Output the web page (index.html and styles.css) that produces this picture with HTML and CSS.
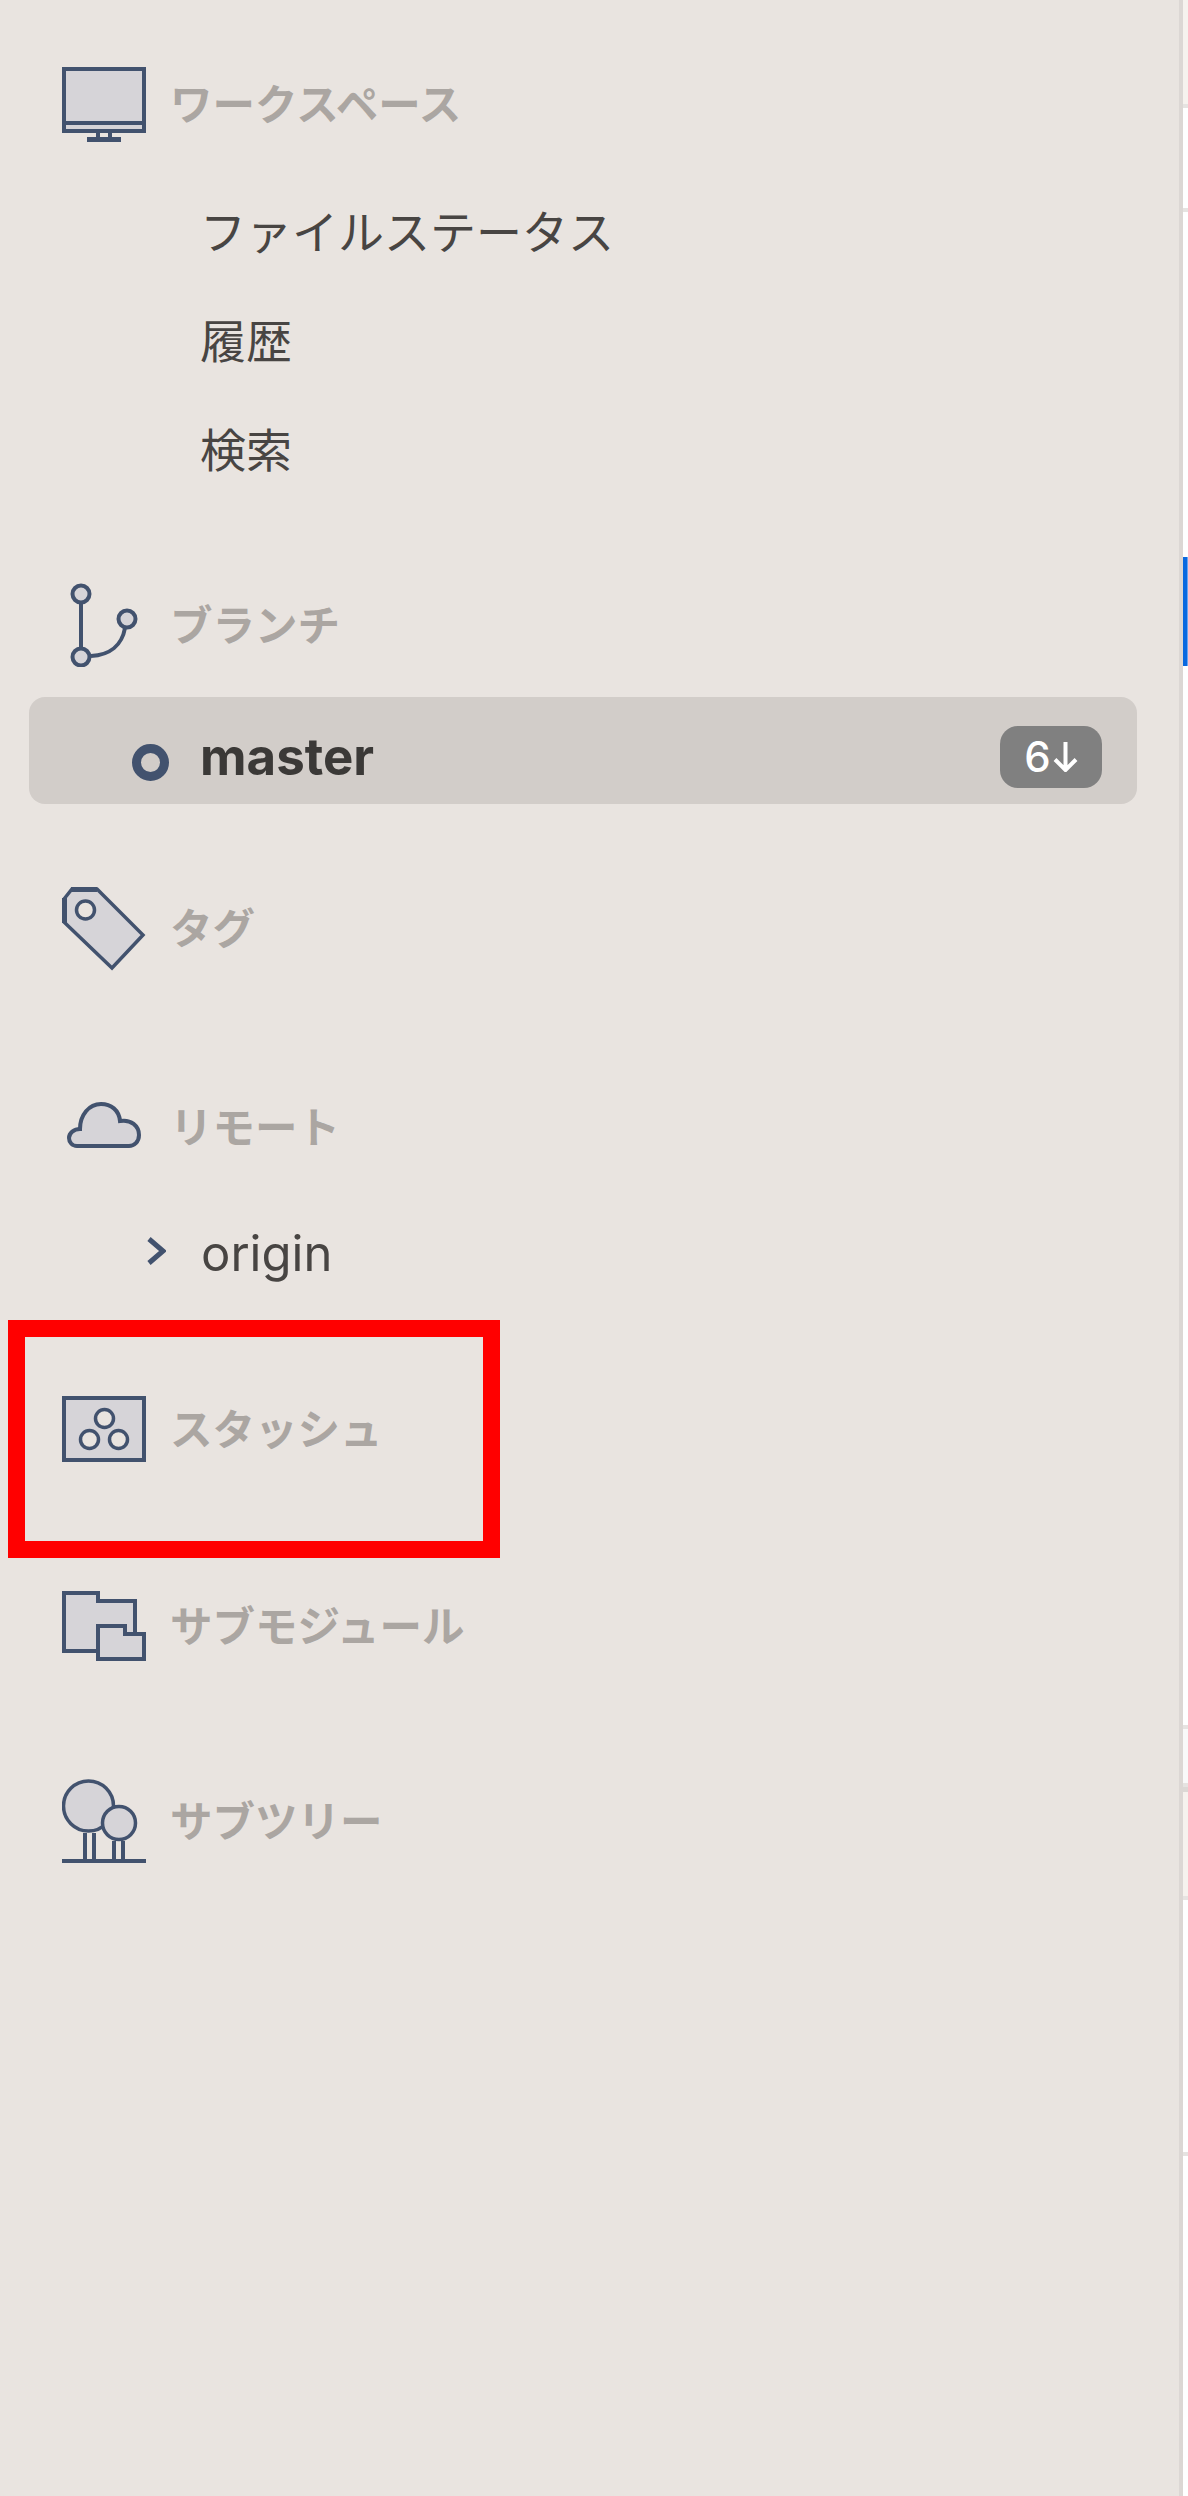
FILE: index.html
```html
<!DOCTYPE html>
<html lang="ja">
<head>
    <title>サイドバー</title>
    <link rel="stylesheet" href="styles.css">
</head>
<body>
    <div class="window">
        <nav class="sidebar">
            <div class="head">
                <svg class="icon" width="84" height="75" viewBox="0 0 84 75">
                    <rect class="shape" x="2" y="2" width="80" height="62"/>
                    <path class="line" d="M2 56H82"/>
                    <path class="solid" d="M34 66h4v5h-4zM46 66h4v5h-4zM25 70h34v5H25z"/>
                </svg>
                <span class="title">ワークスペース</span>
            </div>
            <ul class="items">
                <li>ファイルステータス</li>
                <li>履歴</li>
                <li>検索</li>
            </ul>

            <div class="head head-branch">
                <svg class="icon" width="84" height="84" viewBox="0 0 84 84">
                    <path class="line" d="M19 20V65M29 73C48 72 60 62 63 45"/>
                    <circle class="shape" cx="19" cy="11" r="8.5"/>
                    <circle class="shape" cx="65" cy="36" r="8.5"/>
                    <circle class="shape" cx="19" cy="74" r="8.5"/>
                </svg>
                <span class="title">ブランチ</span>
            </div>
            <div class="branch">
                <span class="dot"></span>
                <span class="branch-name">master</span>
                <span class="badge">6<svg width="25" height="31" viewBox="0 0 25 31"><path d="M12.500 1V29M2 18.500L12.500 29L23 18.500"/></svg></span>
            </div>

            <div class="head head-tag">
                <svg class="icon" width="84" height="84" viewBox="0 0 84 84">
                    <path class="shape thin" d="M10 2H35L81 48L50 81L2 35V12Z"/>
                    <path class="solid" d="M9 0H35V5H9zM0 11H5V36H0z"/>
                    <circle class="hole" cx="23.5" cy="23" r="9"/>
                </svg>
                <span class="title">タグ</span>
            </div>

            <div class="head head-remote">
                <svg class="icon" width="74" height="48" viewBox="0 0 74 48">
                    <path class="shape" d="M10 45C5 45 2 41 2 37C2 32 7 28 13 28C13 14 22 3 34 3C44 3 52 9 53 20C64 18 72 25 72 34C72 41 67 45 62 45Z"/>
                </svg>
                <span class="title">リモート</span>
            </div>
            <div class="remote">
                <svg class="chevron" width="20" height="30" viewBox="0 0 20 30">
                    <path d="M3 3L17 15L3 27"/>
                </svg>
                <span>origin</span>
            </div>

            <div class="head head-stash">
                <svg class="icon" width="84" height="66" viewBox="0 0 84 66">
                    <rect class="shape" x="2" y="2" width="80" height="62"/>
                    <circle class="hole" cx="42.500" cy="22.500" r="9"/>
                    <circle class="hole" cx="27.500" cy="43.500" r="9"/>
                    <circle class="hole" cx="56.500" cy="43.500" r="9"/>
                </svg>
                <span class="title">スタッシュ</span>
            </div>

            <div class="head head-sub">
                <svg class="icon" width="84" height="70" viewBox="0 0 84 70">
                    <path class="shape" d="M2 2H36V10H73V60H2Z"/>
                    <path class="shape" d="M36 35H63V43H82V68H36Z"/>
                </svg>
                <span class="title">サブモジュール</span>
            </div>

            <div class="head head-tree">
                <svg class="icon" width="84" height="84" viewBox="0 0 84 84">
                    <circle class="shape thin" cx="26.500" cy="27" r="25"/>
                    <path class="line" d="M23 54V80M32 54V80M52 62V80M61 62V80M0 82H84"/>
                    <circle class="shape thin" cx="57" cy="44" r="16.500"/>
                </svg>
                <span class="title">サブツリー</span>
            </div>
        </nav>

        <div class="divider"></div>

        <div class="strip">
            <div class="cell cream h104"></div>
            <div class="rule"></div>
            <div class="cell h100"></div>
            <div class="rule"></div>
            <div class="cell h345"></div>
            <div class="blue"></div>
            <div class="cell h1059"></div>
            <div class="rule"></div>
            <div class="cell grey h54"></div>
            <div class="rule"></div>
            <div class="rule dark"></div>
            <div class="cell cream h104"></div>
            <div class="rule"></div>
            <div class="cell h252"></div>
            <div class="rule"></div>
        </div>

        <div class="marker"></div>
    </div>
</body>
</html>
```

FILE: styles.css
```css
* {
    box-sizing: border-box;
}
body {
    margin: 0;
    background: #fff;
    font-family: "Noto Sans CJK JP", "Noto Sans", sans-serif;
}
.window {
    position: relative;
    display: flex;
    width: 1188px;
    height: 2496px;
    overflow: hidden;
}
.sidebar {
    flex: 0 0 1179px;
    padding-top: 64px;
    background: #e9e4e0;
}
.divider {
    flex: 0 0 4px;
    background: #dcd7d4;
}
.strip {
    flex: 0 0 5px;
    background: #fff;
}

/* section headers */
.head {
    display: flex;
    align-items: center;
    height: 80px;
    padding-left: 62px;
}
.icon {
    flex: 0 0 auto;
    margin-right: 24px;
}
.title {
    padding-bottom: 6px;
    font-size: 42.5px;
    font-weight: 700;
    color: #aba6a2;
    white-space: nowrap;
}
.head-branch {
    margin-top: 83px;
}
.head-tag {
    margin-top: 84px;
}
.head-tag .icon {
    margin-top: 2px;
}
.head-remote {
    margin-top: 119px;
}
.head-remote .icon {
    margin-left: 5px;
    margin-right: 29px;
    margin-bottom: 5px;
}
.head-stash {
    margin-top: 78px;
}
.head-sub {
    margin-top: 117px;
}
.head-tree {
    margin-top: 115px;
}

/* icon strokes */
.shape {
    fill: #d6d4d8;
    stroke: #42526e;
    stroke-width: 4;
}
.shape.thin {
    stroke-width: 3.5;
}
.line {
    fill: none;
    stroke: #42526e;
    stroke-width: 4;
}
.solid {
    fill: #42526e;
}
.hole {
    fill: #e9e4e0;
    stroke: #42526e;
    stroke-width: 3.5;
}

/* workspace items */
.items {
    list-style: none;
    margin: 31px 0 0;
    padding: 0 0 0 200px;
}
.items li {
    height: 109px;
    line-height: 109px;
    font-size: 46px;
    color: #484543;
}

/* current branch */
.branch {
    display: flex;
    align-items: center;
    height: 107px;
    margin: 32px 42px 0 29px;
    padding: 12px 35px 0 103px;
    background: #d2cdc9;
    border-radius: 16px;
}
.dot {
    width: 37px;
    height: 37px;
    margin-top: 12px;
    border: 9.5px solid #42526e;
    border-radius: 50%;
}
.branch-name {
    flex: 1;
    margin-left: 31px;
    font-family: "Inter", sans-serif;
    font-size: 51px;
    font-weight: 700;
    color: #3b3937;
}
.badge {
    display: flex;
    align-items: center;
    justify-content: center;
    gap: 2px;
    width: 102px;
    height: 62px;
    border-radius: 18px;
    background: #808080;
    color: #fff;
    font-family: "Inter", sans-serif;
    font-size: 42px;
    font-weight: 500;
}
.badge svg {
    fill: none;
    stroke: #fff;
    stroke-width: 4;
}

/* remote */
.remote {
    display: flex;
    align-items: center;
    height: 110px;
    margin-top: 34px;
    padding-left: 146px;
    font-family: "Inter", sans-serif;
    font-size: 49px;
    color: #484543;
}
.remote span {
    padding-bottom: 6px;
}
.chevron {
    margin-right: 35px;
    margin-bottom: 10px;
    fill: none;
    stroke: #42526e;
    stroke-width: 5;
}

/* right edge of the next pane */
.cell {
    background: #fff;
}
.cream {
    background: #f6f2ee;
}
.grey {
    background: #f9f9f9;
}
.h54 {
    height: 54px;
}
.h100 {
    height: 100px;
}
.h104 {
    height: 104px;
}
.h252 {
    height: 252px;
}
.h345 {
    height: 345px;
}
.h1059 {
    height: 1059px;
}
.rule {
    height: 4px;
    background: #e6e3e1;
}
.rule.dark {
    height: 5px;
    background: #dcd8d5;
}
.blue {
    height: 109px;
    border-right: 1px solid #6aa5ee;
    background: #0a69e0;
}

/* annotation drawn over the screenshot */
.marker {
    position: absolute;
    left: 8px;
    top: 1320px;
    width: 492px;
    height: 238px;
    border: 17px solid #f00;
}
```
